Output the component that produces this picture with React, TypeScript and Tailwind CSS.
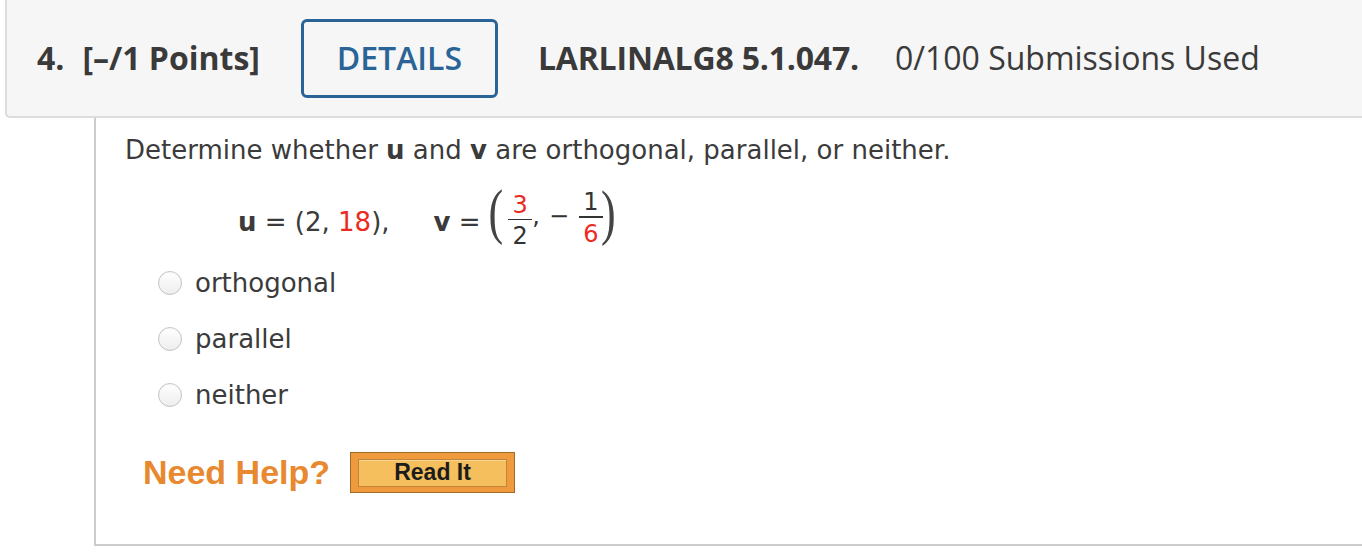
import React from 'react';

const sans = { fontFamily: '"Open Sans", "DejaVu Sans", sans-serif' };
const body = { fontFamily: '"DejaVu Sans", Verdana, sans-serif' };
const arial = { fontFamily: '"Liberation Sans", Arial, sans-serif' };

function Frac({ top, bottom, topRed, bottomRed }: { top: string; bottom: string; topRed?: boolean; bottomRed?: boolean }) {
  return (
    <span className="inline-flex flex-col items-center">
      <span className={`text-[24px] leading-[24px] ${topRed ? 'text-[#ec2a1e]' : 'text-[#333]'}`}>{top}</span>
      <span className="h-[1.5px] w-[24px] bg-[#333] mt-[2px] mb-[4px]" />
      <span className={`text-[24px] leading-[24px] ${bottomRed ? 'text-[#ec2a1e]' : 'text-[#333]'}`}>{bottom}</span>
    </span>
  );
}

function Paren({ ch }: { ch: string }) {
  return (
    <span
      className="inline-block text-[44px] leading-[44px] text-[#444] scale-y-[1.4] -mt-[12px]"
      style={{ fontFamily: '"Liberation Serif", serif' }}
    >
      {ch}
    </span>
  );
}

function Radio({ label }: { label: string }) {
  return (
    <label className="flex items-center h-[32px] ml-[33px]">
      <span className="w-[24px] h-[24px] rounded-full border border-[#c4c4c4] bg-gradient-to-b from-white to-[#ededed] shadow-[inset_0_1px_1px_rgba(0,0,0,0.04)]" />
      <span className="ml-[13px] text-[26px] leading-[32px] text-[#3b3b3b]">{label}</span>
    </label>
  );
}

export default function App() {
  return (
    <div className="w-[1362px] h-[556px] bg-white overflow-hidden">
      {/* question header */}
      <div
        className="ml-[5px] h-[118px] flex items-center bg-[#f6f6f6] border-l-2 border-b-2 border-[#dddddd] rounded-bl-[5px] pl-[30px] text-[32px] text-[#3a3a3a]"
        style={sans}
      >
        <span className="font-bold">4.</span>
        <span className="font-bold ml-[18px]">[–/1 Points]</span>
        <span className="ml-[41px] h-[79px] w-[197px] flex items-center justify-center border-[3px] border-[#2a6496] rounded-[6px] text-[#2a6496] font-semibold">
          DETAILS
        </span>
        <span className="font-bold ml-[40px] tracking-[-0.2px]">LARLINALG8 5.1.047.</span>
        <span className="ml-[36px]">0/100 Submissions Used</span>
      </div>

      {/* question body */}
      <div className="ml-[94px] h-[428px] border-l-2 border-b-2 border-[#cccccc] pl-[29px] pt-[16px]" style={body}>
        <p className="text-[26px] leading-[32px] text-[#3b3b3b]">
          Determine whether <b>u</b> and <b>v</b> are orthogonal, parallel, or neither.
        </p>

        <div className="mt-[22px] h-[60px] ml-[113px] flex items-center text-[26px] leading-[32px] text-[#3b3b3b]">
          <span className="mt-[8px]">
            <b>u</b> = (2, <span className="text-[#ec2a1e]">18</span>),
          </span>
          <span className="ml-[44px] mt-[8px]">
            <b>v</b> =
          </span>
          <span className="ml-[8px] flex items-center">
            <Paren ch="(" />
            <span className="ml-[5px]">
              <Frac top="3" bottom="2" topRed />
            </span>
            <span className="text-[24px] leading-[24px] text-[#333] -mt-[4px]">,</span>
            <span className="ml-[9px] mr-[10px] text-[24px] leading-[24px] text-[#333] -mt-[4px]">−</span>
            <Frac top="1" bottom="6" bottomRed />
            <span className="-ml-[2px]">
              <Paren ch=")" />
            </span>
          </span>
        </div>

        <div className="mt-[19px] flex flex-col gap-[24px]">
          <Radio label="orthogonal" />
          <Radio label="parallel" />
          <Radio label="neither" />
        </div>

        <div className="mt-[41px] ml-[18px] flex items-center" style={arial}>
          <span className="text-[34px] leading-[41px] font-bold text-[#e8892f]">Need Help?</span>
          <span className="ml-[20px] w-[165px] h-[41px] flex items-center justify-center bg-[#ef9a3c] border border-[#a06a2a]">
            <span className="w-[149px] h-[28px] flex items-center justify-center bg-[#f4bf5c] border border-[#c0843a] shadow-[inset_0_1px_0_rgba(255,255,255,0.35)] text-[23px] font-bold text-[#1c1c1c]">
              Read It
            </span>
          </span>
        </div>
      </div>
    </div>
  );
}
